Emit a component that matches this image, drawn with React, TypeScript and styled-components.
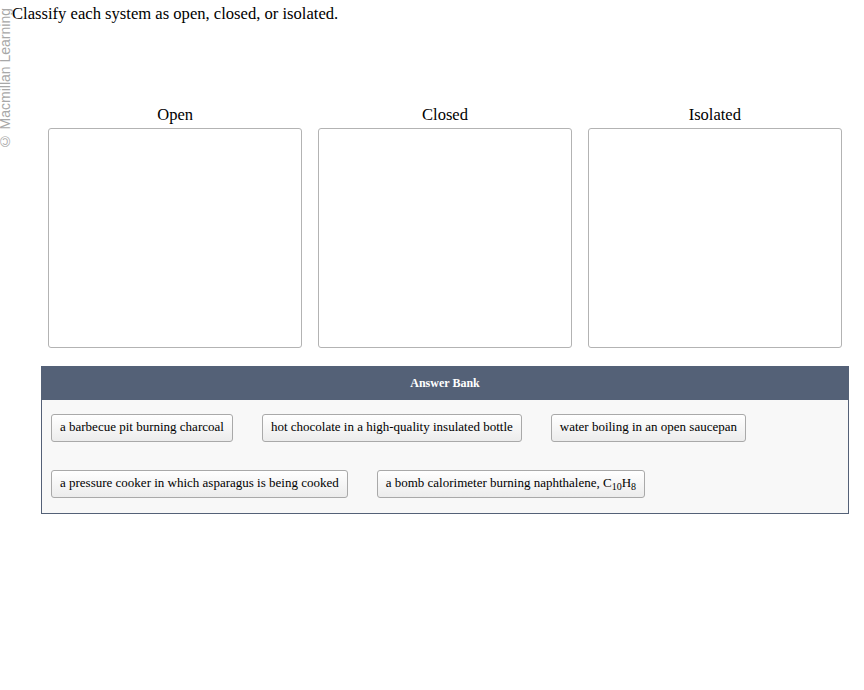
import React from "react";
import styled, { createGlobalStyle } from "styled-components";

const Global = createGlobalStyle`
  html, body { margin: 0; padding: 0; background: #fff; }
  body { font-family: "Liberation Serif", "Times New Roman", serif; color: #000; }
`;

const Page = styled.div`
  position: relative;
  width: 864px;
  height: 690px;
  padding: 4px 0 0 0;
  box-sizing: border-box;
`;

const Watermark = styled.div`
  position: absolute;
  left: 0;
  top: 8px;
  writing-mode: vertical-rl;
  transform: rotate(180deg);
  font-family: "Liberation Sans", Arial, sans-serif;
  font-size: 14px;
  line-height: 11px;
  color: #a8a8a8;
  white-space: nowrap;
`;

const Title = styled.div`
  margin-left: 12px;
  font-size: 16.6px;
  line-height: 20px;
`;

const Columns = styled.div`
  margin: 82px 0 0 41px;
  width: 808px;
  padding: 0 7px;
  box-sizing: border-box;
  display: grid;
  grid-template-columns: repeat(3, 1fr);
  column-gap: 15.5px;
`;

const Column = styled.div`
  display: flex;
  flex-direction: column;
  align-items: stretch;
`;

const ColumnHeader = styled.div`
  text-align: center;
  font-size: 16.5px;
  line-height: 18px;
  height: 22px;
`;

const DropBox = styled.div`
  height: 220px;
  box-sizing: border-box;
  border: 1px solid #b3b3b3;
  border-radius: 3px;
  background: #fff;
`;

const Bank = styled.div`
  margin: 18px 0 0 41px;
  width: 808px;
  box-sizing: border-box;
  border: 1px solid #546177;
`;

const BankHeader = styled.div`
  height: 33px;
  background: #546177;
  color: #fff;
  font-weight: bold;
  font-size: 12px;
  display: flex;
  align-items: center;
  justify-content: center;
`;

const BankBody = styled.div`
  background: #f8f8f8;
  display: flex;
  flex-wrap: wrap;
  gap: 28px 29px;
  padding: 14px 9px 15px;
`;

const Chip = styled.div`
  height: 28px;
  box-sizing: border-box;
  padding: 0 8px 2px;
  border: 1px solid #a9a9a9;
  border-radius: 3px;
  background: linear-gradient(#ffffff, #ececec);
  font-size: 13px;
  display: flex;
  align-items: center;
  white-space: nowrap;
`;

const Label = styled.span`
  display: inline-block;
`;

const Sub = styled.sub`
  font-size: 10px;
  line-height: 0;
  vertical-align: -3px;
`;

export default function App() {
  return (
    <>
      <Global />
      <Page>
        <Watermark>© Macmillan Learning</Watermark>
        <Title>Classify each system as open, closed, or isolated.</Title>
        <Columns>
          {["Open", "Closed", "Isolated"].map((c) => (
            <Column key={c}>
              <ColumnHeader>{c}</ColumnHeader>
              <DropBox />
            </Column>
          ))}
        </Columns>
        <Bank>
          <BankHeader>Answer Bank</BankHeader>
          <BankBody>
            <Chip><Label>a barbecue pit burning charcoal</Label></Chip>
            <Chip><Label>hot chocolate in a high-quality insulated bottle</Label></Chip>
            <Chip><Label>water boiling in an open saucepan</Label></Chip>
            <Chip><Label>a pressure cooker in which asparagus is being cooked</Label></Chip>
            <Chip>
              <Label>
                a bomb calorimeter burning naphthalene, C<Sub>10</Sub>H<Sub>8</Sub>
              </Label>
            </Chip>
          </BankBody>
        </Bank>
      </Page>
    </>
  );
}
